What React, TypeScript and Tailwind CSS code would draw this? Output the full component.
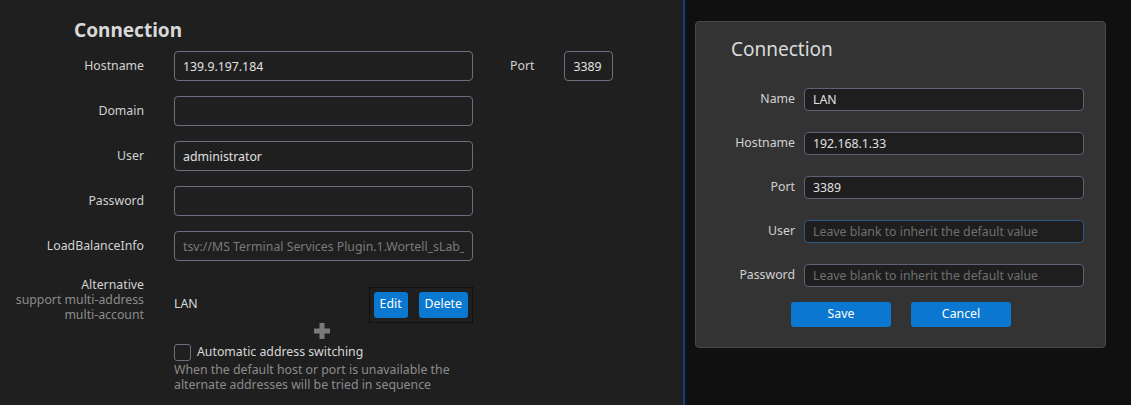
const font = { fontFamily: '"Noto Sans", "Liberation Sans", sans-serif' };

const LeftField = ({ label, value, muted }: { label: string; value?: string; muted?: boolean }) => (
  <div className="flex items-center h-[30px]">
    <div className="w-[144px] text-right text-[12.3px] text-[#d2d2d2]">{label}</div>
    <input
      readOnly
      value={value ?? ''}
      className={`ml-[30px] w-[299px] h-[30px] rounded-[4px] border border-[#6a7080] bg-[#1f1f1f] px-2 text-[12.3px] outline-none ${
        muted ? 'text-[#7a7a7a]' : 'text-[#e0e0e0]'
      }`}
    />
  </div>
);

const DialogField = ({ label, value, placeholder, focused }: { label: string; value?: string; placeholder?: string; focused?: boolean }) => (
  <div className="flex items-center h-[23px]">
    <div className="w-[99px] text-right text-[12.3px] text-[#d2d2d2]">{label}</div>
    <input
      readOnly
      value={value ?? ''}
      placeholder={placeholder}
      className={`ml-[9px] w-[280px] h-[23px] rounded-[4px] border bg-[#1e1e1e] px-2 text-[12.3px] text-[#e0e0e0] placeholder:text-[#6f6f6f] outline-none ${
        focused ? 'border-[#2d5a82]' : 'border-[#5d6374]'
      }`}
    />
  </div>
);

export default function App() {
  return (
    <div className="flex w-[1131px] h-[405px] overflow-hidden bg-[#101010]" style={font}>
      {/* main settings panel */}
      <div className="w-[683px] h-full bg-[#1f1f1f] pt-[16px]">
        <h2 className="ml-[74px] text-[19px] leading-[28px] font-bold text-[#d8d8d8]">Connection</h2>
        <div className="mt-[7px] flex flex-col gap-[15px]">
          <div className="flex items-center">
            <LeftField label="Hostname" value="139.9.197.184" />
            <span className="ml-[37px] text-[12.3px] text-[#d2d2d2]">Port</span>
            <input
              readOnly
              value="3389"
              className="ml-[30px] w-[49px] h-[30px] rounded-[4px] border border-[#6a7080] bg-[#1f1f1f] px-2 text-[12.3px] text-[#e0e0e0] outline-none"
            />
          </div>
          <LeftField label="Domain" />
          <LeftField label="User" value="administrator" />
          <LeftField label="Password" />
          <LeftField label="LoadBalanceInfo" value="tsv://MS Terminal Services Plugin.1.Wortell_sLab_Session" muted />
        </div>

        <div className="mt-[16px] flex">
          <div className="w-[144px] text-right text-[12.3px] leading-[15px]">
            <div className="text-[#d2d2d2]">Alternative</div>
            <div className="text-[#8c8c8c]">support multi-address</div>
            <div className="text-[#8c8c8c]">multi-account</div>
          </div>
          <div className="ml-[30px] w-[299px]">
            <div className="mt-[10px] flex items-center justify-between h-[35px]">
              <span className="text-[12.3px] text-[#d8d8d8]">LAN</span>
              <div className="flex items-center gap-[11px] border border-dotted border-[#050505] p-[4px]">
                <button className="h-[26px] px-[6px] rounded-[3px] bg-[#0a78d0] text-[12.3px] text-white">Edit</button>
                <button className="h-[26px] px-[6px] rounded-[3px] bg-[#0a78d0] text-[12.3px] text-white">Delete</button>
              </div>
            </div>
            <div className="flex justify-center">
              <svg width="16" height="16" viewBox="0 0 16 16" className="mt-[1px] mr-[3px]">
                <rect x="5.5" y="0" width="5" height="16" fill="#7a7a7a" />
                <rect x="0" y="5.5" width="16" height="5" fill="#7a7a7a" />
              </svg>
            </div>
            <label className="mt-[4px] flex items-center gap-[6px]">
              <span className="w-[17px] h-[17px] rounded-[3px] border border-[#6a7080]" />
              <span className="text-[12.3px] text-[#d8d8d8]">Automatic address switching</span>
            </label>
            <p className="mt-[1px] text-[12.3px] leading-[15px] text-[#8c8c8c]">
              When the default host or port is unavailable the
              <br />
              alternate addresses will be tried in sequence
            </p>
          </div>
        </div>
      </div>

      {/* divider */}
      <div className="w-[2px] h-full bg-[#1b3f6c]" />
      <div className="w-[2px] h-full bg-[#0c1522]" />

      {/* dialog area */}
      <div className="flex-1 pl-[8px] pt-[21px]">
        <div className="w-[411px] rounded-[4px] border border-[#494949] bg-[#333333] pt-[13px] pb-[20px]">
          <h2 className="ml-[35px] text-[19px] leading-[28px] text-[#dadada]">Connection</h2>
          <div className="mt-[25px] flex flex-col gap-[21px]">
            <DialogField label="Name" value="LAN" />
            <DialogField label="Hostname" value="192.168.1.33" />
            <DialogField label="Port" value="3389" />
            <DialogField label="User" placeholder="Leave blank to inherit the default value" focused />
            <DialogField label="Password" placeholder="Leave blank to inherit the default value" />
          </div>
          <div className="mt-[15px] ml-[95px] flex gap-[20px]">
            <button className="w-[100px] h-[25px] rounded-[3px] bg-[#0a78d0] text-[12.3px] text-white">Save</button>
            <button className="w-[100px] h-[25px] rounded-[3px] bg-[#0a78d0] text-[12.3px] text-white">Cancel</button>
          </div>
        </div>
      </div>
    </div>
  );
}
